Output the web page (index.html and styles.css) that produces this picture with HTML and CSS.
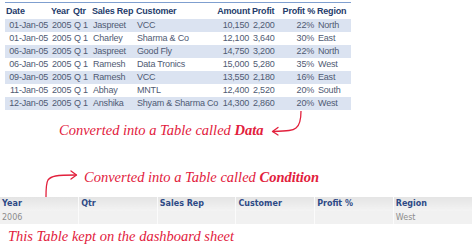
FILE: index.html
```html
<!DOCTYPE html>
<html>
<head>
<meta charset="utf-8">
<link rel="stylesheet" href="styles.css">
</head>
<body>
<div class="page">
  <table class="data">
    <colgroup>
      <col class="c-date"><col class="c-year"><col class="c-qtr"><col class="c-rep"><col class="c-cust"><col class="c-amt"><col class="c-prof"><col class="c-pct"><col class="c-reg">
    </colgroup>
    <thead>
      <tr><th class="l">Date</th><th class="l">Year</th><th class="l">Qtr</th><th class="l">Sales Rep</th><th class="l">Customer</th><th class="r">Amount</th><th class="l">Profit</th><th class="r">Profit %</th><th class="l">Region</th></tr>
    </thead>
    <tbody>
      <tr class="band"><td class="r">01-Jan-05</td><td>2005</td><td>Q 1</td><td>Jaspreet</td><td>VCC</td><td class="r">10,150</td><td>2,200</td><td class="r">22%</td><td>North</td></tr>
      <tr><td class="r">01-Jan-05</td><td>2005</td><td>Q 1</td><td>Charley</td><td>Sharma &amp; Co</td><td class="r">12,100</td><td>3,640</td><td class="r">30%</td><td>East</td></tr>
      <tr class="band"><td class="r">06-Jan-05</td><td>2005</td><td>Q 1</td><td>Jaspreet</td><td>Good Fly</td><td class="r">14,750</td><td>3,200</td><td class="r">22%</td><td>North</td></tr>
      <tr><td class="r">06-Jan-05</td><td>2005</td><td>Q 1</td><td>Ramesh</td><td>Data Tronics</td><td class="r">15,000</td><td>5,280</td><td class="r">35%</td><td>West</td></tr>
      <tr class="band"><td class="r">09-Jan-05</td><td>2005</td><td>Q 1</td><td>Ramesh</td><td>VCC</td><td class="r">13,550</td><td>2,180</td><td class="r">16%</td><td>East</td></tr>
      <tr><td class="r">11-Jan-05</td><td>2005</td><td>Q 1</td><td>Abhay</td><td>MNTL</td><td class="r">12,400</td><td>2,520</td><td class="r">20%</td><td>South</td></tr>
      <tr class="band"><td class="r">12-Jan-05</td><td>2005</td><td>Q 1</td><td>Anshika</td><td>Shyam &amp; Sharma Co</td><td class="r">14,300</td><td>2,860</td><td class="r">20%</td><td>West</td></tr>
    </tbody>
  </table>

  <div class="note note-data">
    <span class="hand">Converted into a Table called <b>Data</b></span>
    <svg class="arrow" width="40" height="26" viewBox="0 0 40 26">
      <path d="M33 0 C33 9 32 14 28 17 C25 19.5 20 20 5 20.5" fill="none" stroke="#e2203c" stroke-width="1.3" stroke-linecap="round"/>
      <path d="M10 16.5 L4.5 20.5 L10 24" fill="none" stroke="#e2203c" stroke-width="1.3" stroke-linecap="round" stroke-linejoin="round"/>
    </svg>
  </div>

  <div class="note note-cond">
    <svg class="arrow" width="42" height="36" viewBox="0 0 42 36">
      <path d="M10 36 C10 28 10 22 12 19 C15 15 20 14 40 14" fill="none" stroke="#e2203c" stroke-width="1.3" stroke-linecap="round"/>
      <path d="M35 10 L40.5 14 L35 18" fill="none" stroke="#e2203c" stroke-width="1.3" stroke-linecap="round" stroke-linejoin="round"/>
    </svg>
    <span class="hand">Converted into a Table called <b>Condition</b></span>
  </div>

  <table class="cond">
    <thead>
      <tr><th>Year</th><th>Qtr</th><th>Sales Rep</th><th>Customer</th><th>Profit %</th><th>Region</th></tr>
    </thead>
    <tbody>
      <tr><td>2006</td><td></td><td></td><td></td><td></td><td>West</td></tr>
    </tbody>
  </table>

  <div class="footnote"><span class="hand">This Table kept on the dashboard sheet</span></div>
</div>
</body>
</html>
```

FILE: styles.css
```css
html, body {
  margin: 0;
  padding: 0;
  background: #ffffff;
}

.page {
  width: 474px;
  height: 248px;
  overflow: hidden;
  display: flex;
  flex-direction: column;
}

/* ---------- top data table ---------- */
.data {
  margin: 2px 0 0 5px;
  width: 346px;
  border-collapse: collapse;
  table-layout: fixed;
  font-family: "Liberation Sans", Arial, sans-serif;
  font-size: 9px;
  letter-spacing: -0.2px;
}
.c-date { width: 45px; }
.c-year { width: 22px; }
.c-qtr { width: 19px; }
.c-rep { width: 44px; }
.c-cust { width: 77px; }
.c-amt { width: 39px; }
.c-prof { width: 29px; }
.c-pct { width: 36px; }
.c-reg { width: 35px; }

.data thead tr {
  border-top: 1px solid #7f9fcf;
  height: 16px;
}
.data th {
  color: #253c6b;
  font-weight: bold;
  font-size: 9px;
  padding: 1px 1px 0 1px;
  white-space: nowrap;
}
.data td {
  color: #4f5a73;
  padding: 0 2px;
  height: 13px;
  line-height: 13px;
  white-space: nowrap;
}
.data .l { text-align: left; }
.data .r { text-align: right; }
.data tr.band td { background: #dbe3f1; }

/* ---------- annotations ---------- */
.hand {
  font-family: "Liberation Serif", "Times New Roman", serif;
  font-style: italic;
  font-size: 14.5px;
  line-height: 16px;
  color: #e2203c;
  white-space: nowrap;
}
.hand b {
  font-weight: bold;
}

.note {
  display: flex;
  align-items: flex-start;
}
.arrow { display: block; flex: none; }

.note-data {
  margin: 1px 0 0 59px;
  height: 36px;
}
.note-data .hand {
  width: 203px;
  margin-top: 11px;
}
.note-data .arrow {
  margin-left: 6px;
}

.note-cond {
  margin: 14px 0 0 36px;
  height: 36px;
}
.note-cond .hand {
  margin-top: 8px;
  margin-left: 6px;
}

/* ---------- condition table ---------- */
.cond {
  margin: 0;
  width: 472px;
  border-collapse: collapse;
  table-layout: fixed;
  font-family: "DejaVu Sans", Verdana, sans-serif;
  font-size: 8px;
}
.cond th {
  height: 14px;
  padding: 0 2px;
  text-align: left;
  color: #2e4a86;
  font-weight: bold;
  background: linear-gradient(#e4e4e4, #f3f3f3);
  border-right: 1px solid #fbfbfb;
}
.cond td {
  height: 13px;
  padding: 0 2px;
  text-align: left;
  color: #8c8c8c;
  background: #f1f1f1;
  border-right: 1px solid #fbfbfb;
}
.cond th:last-child, .cond td:last-child { border-right: none; }

.footnote {
  margin: 3px 0 0 8px;
}
```
